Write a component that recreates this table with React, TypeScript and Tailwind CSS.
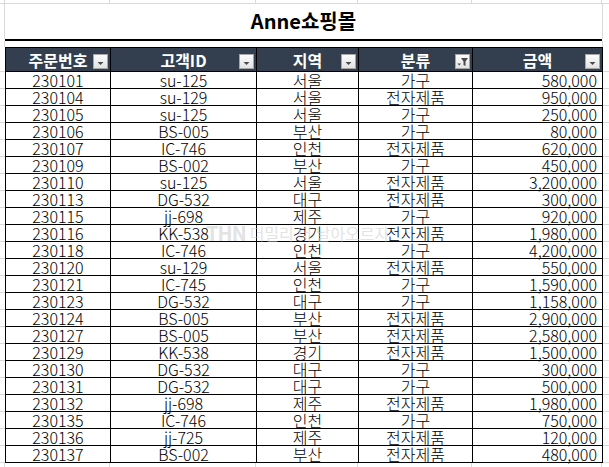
import React from "react";

const rows: [string, string, string, string, string][] = [
  ["230101", "su-125", "서울", "가구", "580,000"],
  ["230104", "su-129", "서울", "전자제품", "950,000"],
  ["230105", "su-125", "서울", "가구", "250,000"],
  ["230106", "BS-005", "부산", "가구", "80,000"],
  ["230107", "IC-746", "인천", "전자제품", "620,000"],
  ["230109", "BS-002", "부산", "가구", "450,000"],
  ["230110", "su-125", "서울", "전자제품", "3,200,000"],
  ["230113", "DG-532", "대구", "전자제품", "300,000"],
  ["230115", "jj-698", "제주", "가구", "920,000"],
  ["230116", "KK-538", "경기", "전자제품", "1,980,000"],
  ["230118", "IC-746", "인천", "가구", "4,200,000"],
  ["230120", "su-129", "서울", "전자제품", "550,000"],
  ["230121", "IC-745", "인천", "가구", "1,590,000"],
  ["230123", "DG-532", "대구", "가구", "1,158,000"],
  ["230124", "BS-005", "부산", "전자제품", "2,900,000"],
  ["230127", "BS-005", "부산", "전자제품", "2,580,000"],
  ["230129", "KK-538", "경기", "전자제품", "1,500,000"],
  ["230130", "DG-532", "대구", "가구", "300,000"],
  ["230131", "DG-532", "대구", "가구", "500,000"],
  ["230132", "jj-698", "제주", "전자제품", "1,980,000"],
  ["230135", "IC-746", "인천", "가구", "750,000"],
  ["230136", "jj-725", "제주", "전자제품", "120,000"],
  ["230137", "BS-002", "부산", "전자제품", "480,000"],
];

function DropBtn({ filter = false }: { filter?: boolean }) {
  return (
    <div className="absolute right-[2px] bottom-[2px] w-[15px] h-[15px] border border-[#a6a6a6] bg-gradient-to-b from-[#fbfbfb] to-[#e3e3e3] flex items-center justify-center">
      {filter ? (
        <svg width="13" height="13" viewBox="0 0 13 13">
          <path d="M5 3 H12 L9.5 6.5 V11 L7.5 10 V6.5 Z" fill="#4a4a4a" />
          <path d="M1.5 8.5 H5 L3.25 10.5 Z" fill="#4a4a4a" />
        </svg>
      ) : (
        <svg width="13" height="13" viewBox="0 0 13 13">
          <path d="M3.5 7 H9.5 L6.5 10 Z" fill="#4a4a4a" />
        </svg>
      )}
    </div>
  );
}

const widths = ["w-[106px] border-l", "w-[146px]", "w-[102px]", "w-[114px]", "w-[130px]"];
const headers = ["주문번호", "고객ID", "지역", "분류", "금액"];

export default function App() {
  return (
    <div
      className="relative w-[609px] h-[467px] overflow-hidden bg-white text-black"
      style={{ fontFamily: "'Noto Sans CJK KR', 'Noto Sans', sans-serif" }}
    >
      {/* top gridline strip */}
      <div className="flex h-[4px] border-b border-[#d9d9d9]">
        <div className="w-[5px] border-r border-[#d9d9d9]" />
        <div className="w-[105px] border-r border-[#d9d9d9]" />
        <div className="w-[146px] border-r border-[#d9d9d9]" />
        <div className="w-[102px] border-r border-[#d9d9d9]" />
        <div className="w-[114px] border-r border-[#d9d9d9]" />
        <div className="w-[130px] border-r border-[#d9d9d9]" />
        <div className="flex-1" />
      </div>
      {/* title */}
      <div className="flex h-[35px]">
        <div className="w-[5px] border-r border-[#d9d9d9]" />
        <div className="w-[597px] flex items-center justify-center text-[20px] font-bold leading-none pb-[1px]">
          Anne쇼핑몰
        </div>
        <div className="flex-1 border-l border-[#d9d9d9]" />
      </div>
      {/* thick line */}
      <div className="flex h-[2px]">
        <div className="w-[5px]" />
        <div className="w-[597px] bg-black" />
      </div>
      {/* gap */}
      <div className="flex h-[6px]">
        <div className="w-[5px] border-r border-[#d9d9d9]" />
        <div className="w-[597px]" />
        <div className="flex-1 border-l border-[#d9d9d9]" />
      </div>
      {/* header */}
      <div className="flex h-[25px]">
        <div className="w-[5px] border-b border-[#d9d9d9]" />
        {headers.map((h, i) => (
          <div
            key={h}
            className={`${widths[i]} relative border-y border-r border-black bg-[#333f4f] text-white font-bold text-[16px] leading-[16px] flex items-center justify-center`}
          >
            {h}
            <DropBtn filter={i === 3} />
          </div>
        ))}
        <div className="flex-1 border-b border-[#d9d9d9]" />
      </div>
      {/* data rows */}
      {rows.map((r) => (
        <div key={r[0]} className="flex h-[17px] text-[16px] leading-[15px] font-light">
          <div className="w-[5px] border-b border-[#d9d9d9]" />
          <div className={`${widths[0]} border-r border-b border-black flex items-center justify-center`}>{r[0]}</div>
          <div className={`${widths[1]} border-r border-b border-black flex items-center justify-center`}>{r[1]}</div>
          <div className={`${widths[2]} border-r border-b border-black flex items-center justify-center`}>{r[2]}</div>
          <div className={`${widths[3]} border-r border-b border-black flex items-center justify-center`}>{r[3]}</div>
          <div className={`${widths[4]} border-r border-b border-black flex items-center justify-end pr-[5px]`}>{r[4]}</div>
          <div className="flex-1 border-b border-[#d9d9d9]" />
        </div>
      ))}
      {/* bottom gridlines */}
      <div className="flex h-[6px]">
        <div className="w-[5px] border-r border-[#d9d9d9]" />
        <div className="w-[105px] border-r border-[#d9d9d9]" />
        <div className="w-[146px] border-r border-[#d9d9d9]" />
        <div className="w-[102px] border-r border-[#d9d9d9]" />
        <div className="w-[114px] border-r border-[#d9d9d9]" />
        <div className="w-[130px] border-r border-[#d9d9d9]" />
        <div className="flex-1" />
      </div>
      {/* watermark */}
      <div className="absolute left-[206px] top-[224px] flex items-center gap-[4px] text-[16px] leading-[18px] text-[#c8c8c8] opacity-50 pointer-events-none whitespace-nowrap">
        <span className="font-bold text-[20px] tracking-[-1px]">THN</span>
        <span>더밀리 더 날아오르자</span>
      </div>
    </div>
  );
}
